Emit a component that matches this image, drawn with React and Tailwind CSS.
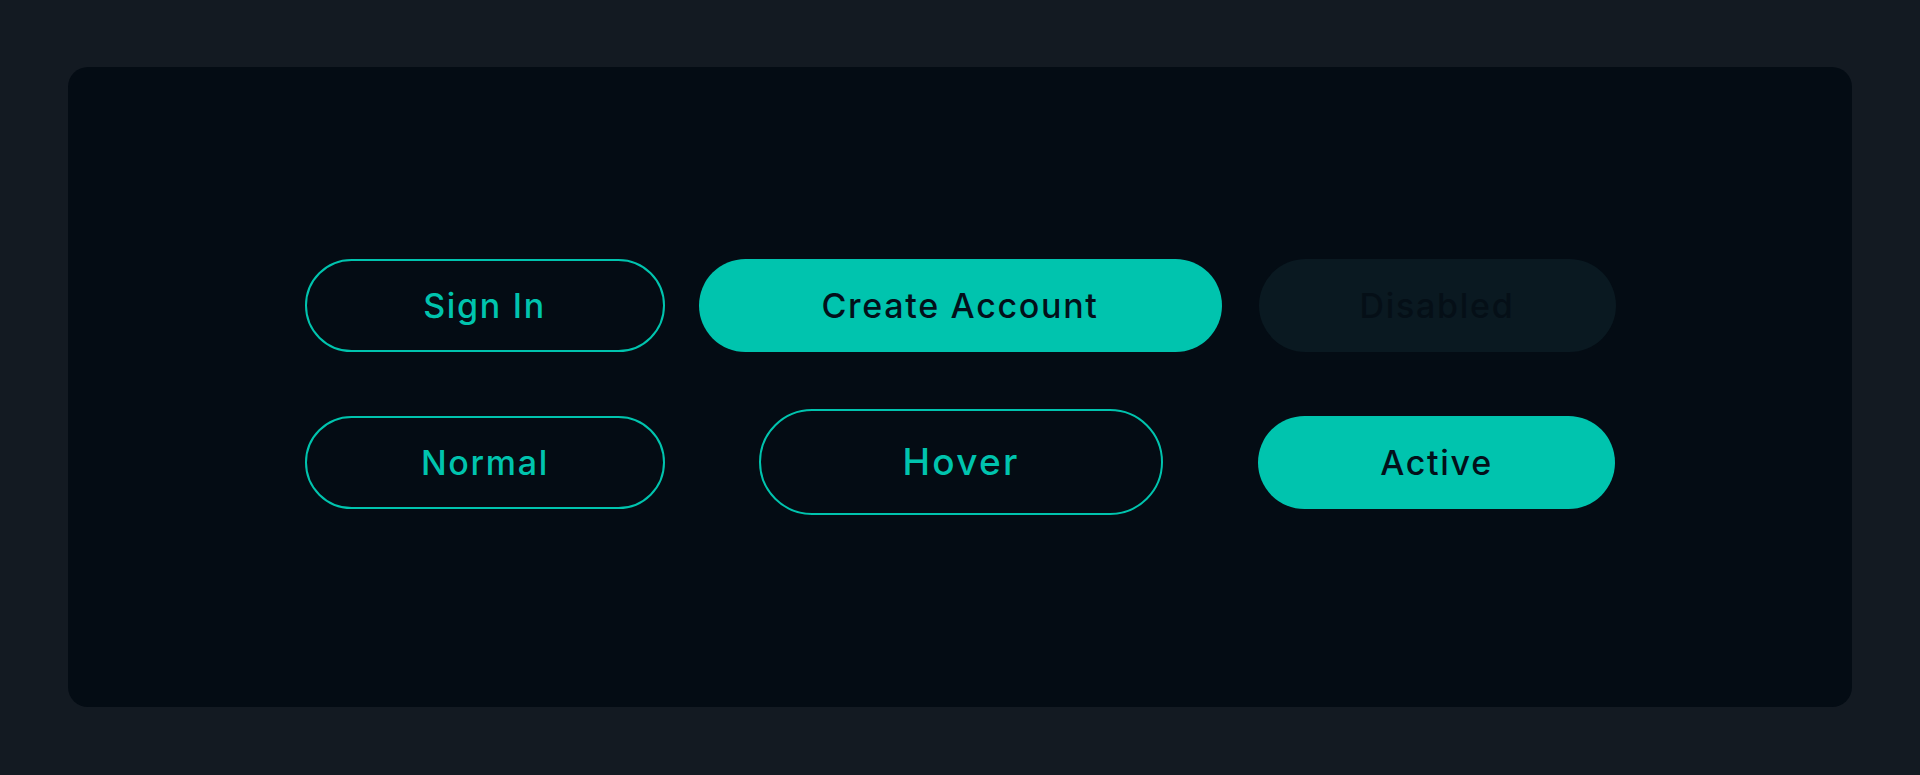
export default function App() {
  const font = { fontFamily: '"Inter", "Noto Sans", sans-serif' };
  return (
    <div className="w-[1920px] h-[775px] bg-[#131a22] pt-[67px] pr-[68px] pb-[68px] pl-[68px]" style={font}>
      <div className="h-full w-full rounded-[20px] bg-[#040c14] flex flex-col items-center justify-center gap-[57px]">
        <div className="flex items-center">
          <button className="w-[360px] h-[93px] rounded-full border-2 border-[#00c4ae] text-[#00c4ae] text-[34px] font-medium tracking-[0.05em]">
            Sign In
          </button>
          <button className="ml-[34px] w-[523px] h-[93px] rounded-full bg-[#00c4ae] text-[#03101a] text-[34px] font-medium tracking-[0.05em]">
            Create Account
          </button>
          <button className="ml-[37px] w-[357px] h-[93px] rounded-full bg-[#0a1921] text-[#050f17] text-[34px] font-medium tracking-[0.05em]">
            Disabled
          </button>
        </div>
        <div className="flex items-center">
          <button className="w-[360px] h-[93px] rounded-full border-2 border-[#00c4ae] text-[#00c4ae] text-[34px] font-medium tracking-[0.05em]">
            Normal
          </button>
          <button className="ml-[94px] w-[404px] h-[106px] rounded-full border-2 border-[#00c4ae] text-[#00c4ae] text-[37px] font-medium tracking-[0.06em]">
            Hover
          </button>
          <button className="ml-[95px] w-[357px] h-[93px] rounded-full bg-[#00c4ae] text-[#03101a] text-[34px] font-medium tracking-[0.05em]">
            Active
          </button>
        </div>
      </div>
    </div>
  );
}
